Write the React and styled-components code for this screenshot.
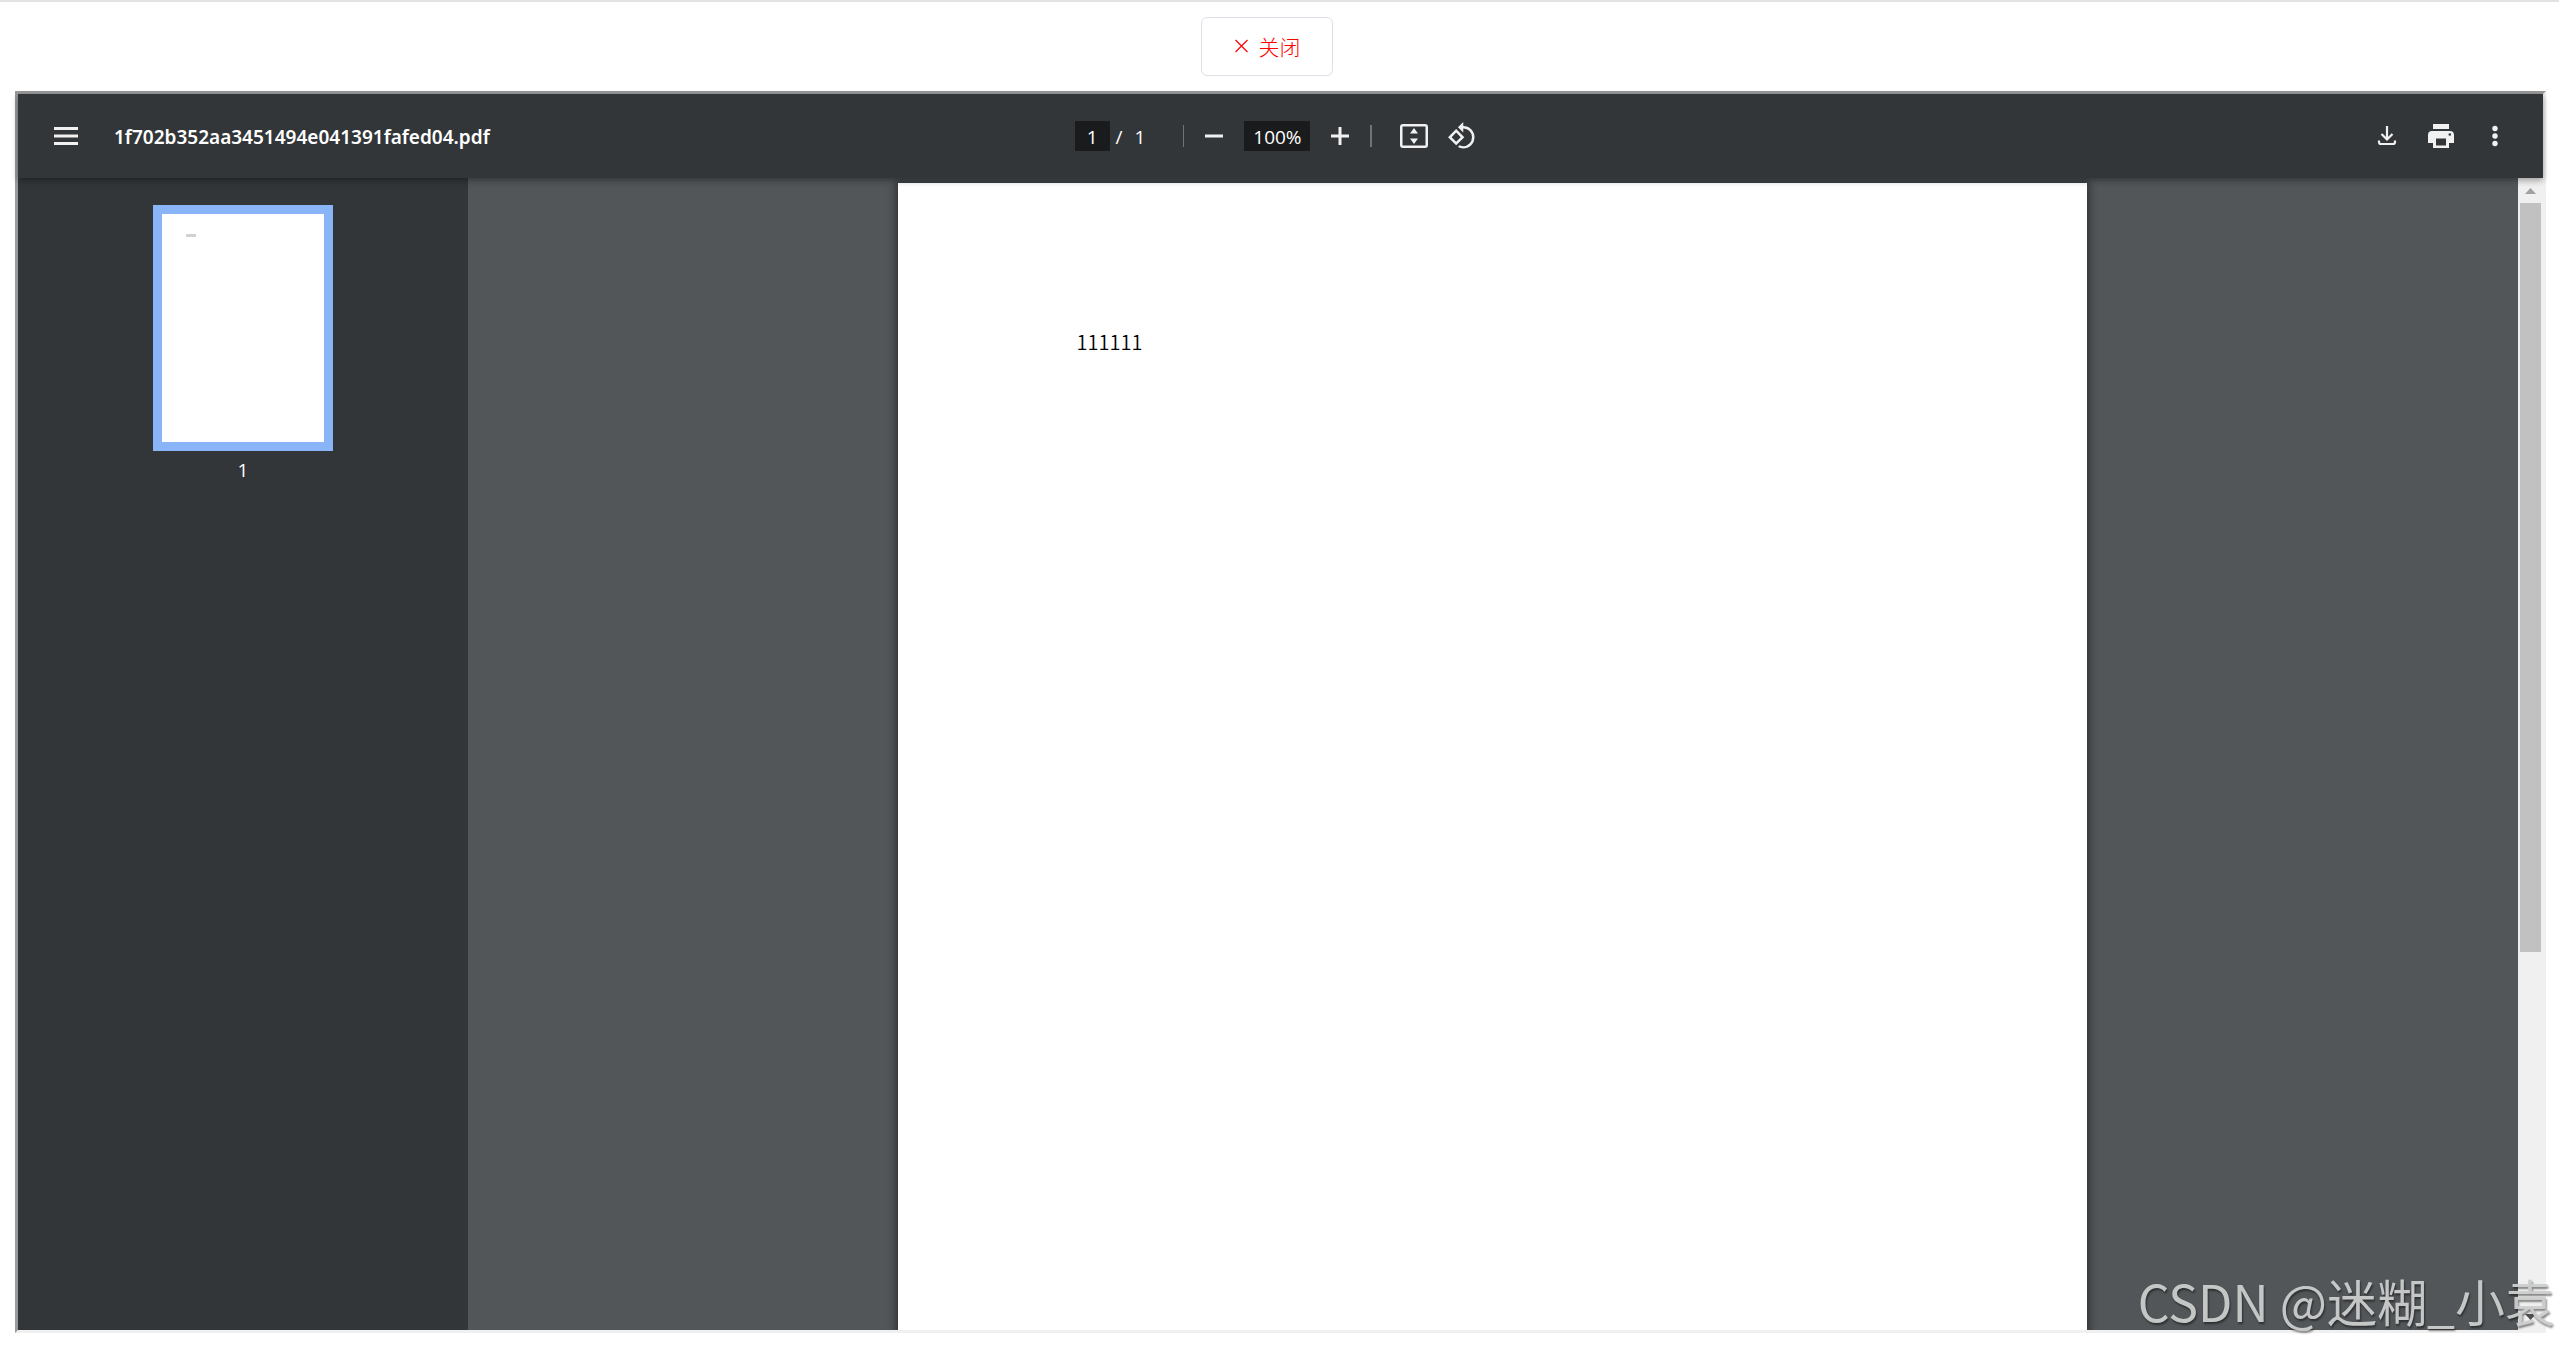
import React from "react";
import styled, { createGlobalStyle } from "styled-components";

const GlobalStyle = createGlobalStyle`
  * { box-sizing: border-box; }
  body { margin: 0; background: #fff; font-family: "Open Sans", "Noto Sans", "Noto Sans CJK SC", sans-serif; }
`;

const Screen = styled.div`
  display: flex;
  flex-direction: column;
  height: 100vh;
  padding: 0 13px 15px 15px;
  border-top: 2px solid #e2e2e2;
  overflow: hidden;
`;

const Actions = styled.header`
  display: flex;
  justify-content: center;
  padding: 15px 28px 15px 0;
`;

const CloseButton = styled.button`
  display: flex;
  align-items: center;
  gap: 10px;
  height: 59px;
  padding: 0 31px 2px 32px;
  border: 1px solid #dcdfe6;
  border-radius: 6px;
  background: #fff;
  color: #f00;
  font: 21px "Noto Sans CJK SC", sans-serif;
  font-weight: 300;
  cursor: pointer;
`;

const Frame = styled.main`
  flex: 1;
  min-height: 0;
  display: flex;
  flex-direction: column;
  border: 3px solid;
  border-color: #9a9a9a #f0f0f0 #f0f0f0 #9a9a9a;
  background: #525659;
`;

const Toolbar = styled.div`
  position: relative;
  z-index: 1;
  display: grid;
  grid-template-columns: 1fr auto 1fr;
  align-items: center;
  height: 84px;
  flex: none;
  background: #323639;
  color: #fff;
  box-shadow: 0 2px 6px rgba(0, 0, 0, 0.3), 0 4px 8px rgba(0, 0, 0, 0.08);
`;

const Group = styled.div`
  display: flex;
  align-items: center;
  justify-content: ${(p) => p.$align || "flex-start"};
  gap: ${(p) => p.$gap || 0}px;
  padding: ${(p) => p.$pad || "0"};
`;

const Title = styled.h1`
  margin: 0;
  padding-top: 2px;
  font-family: "Noto Sans", "Open Sans", sans-serif;
  font-size: 19px;
  line-height: 28px;
  font-weight: 600;
`;

const IconButton = styled.button`
  display: flex;
  align-items: center;
  justify-content: center;
  width: 48px;
  height: 48px;
  padding: 0;
  border: 0;
  background: none;
  color: #f1f1f1;
  cursor: pointer;
`;

const Icon = styled.svg`
  width: 30px;
  height: 30px;
  fill: currentColor;
`;

const CloseIcon = styled.svg`
  width: 15px;
  height: 15px;
  fill: none;
  stroke: currentColor;
`;

const Field = styled.input`
  width: ${(p) => p.$width}px;
  height: 30px;
  padding: 2px 0 0;
  border: 0;
  background: #191b1c;
  color: #fff;
  font: 19px "Open Sans", "Noto Sans", sans-serif;
  text-align: center;
`;

const PageTotal = styled.span`
  display: flex;
  gap: 12px;
  padding: 2px 0 0 6px;
  font-size: 19px;
  line-height: 30px;
`;

const Separator = styled.span`
  width: ${(p) => p.$width}px;
  height: 22px;
  background: #707376;
`;

const Body = styled.div`
  flex: 1;
  min-height: 0;
  display: flex;
`;

const Sidebar = styled.nav`
  width: 450px;
  flex: none;
  display: flex;
  flex-direction: column;
  align-items: center;
  padding-top: 27px;
  background: #323639;
`;

const Thumbnail = styled.button`
  width: 180px;
  height: 246px;
  display: flex;
  align-items: flex-start;
  padding: 20px 24px;
  border: 9px solid #8ab4f8;
  background: #fff;
  cursor: pointer;
`;

const ThumbnailInk = styled.span`
  width: 10px;
  height: 3px;
  background: #d2d2d2;
`;

const ThumbnailLabel = styled.span`
  margin-top: 6px;
  color: #fff;
  font-size: 19px;
  line-height: 26px;
`;

const Viewport = styled.section`
  flex: 1;
  display: flex;
  justify-content: center;
  align-items: flex-start;
  padding: 5px 2px 0 0;
  overflow: hidden;
`;

const Sheet = styled.article`
  width: 1189px;
  flex: none;
  aspect-ratio: 210 / 297;
  padding: 144px 179px;
  background: #fff;
  box-shadow: 0 0 8px 2px rgba(0, 0, 0, 0.45);
`;

const Paragraph = styled.p`
  margin: 0;
  color: #000;
  font: 20px/30px "Noto Sans CJK SC", sans-serif;
  font-weight: 350;
`;

const Scrollbar = styled.div`
  width: 25px;
  flex: none;
  display: flex;
  flex-direction: column;
  background: #f0f0f0;
`;

const ScrollArrow = styled.svg`
  width: 25px;
  height: 25px;
  flex: none;
  fill: ${(p) => p.$color};
`;

const ScrollTrack = styled.div`
  flex: 1;
  padding: 0 2px;
`;

const ScrollThumb = styled.div`
  height: 68%;
  background: #c1c1c1;
`;

const Watermark = styled.div`
  position: fixed;
  z-index: 2;
  right: 4px;
  bottom: 12px;
  color: rgba(204, 205, 206, 0.95);
  font: 50px/72px "Noto Sans CJK SC", sans-serif;
  text-shadow: 1px 2px 2px rgba(0, 0, 0, 0.45);
  white-space: nowrap;
  pointer-events: none;
`;

export default function App() {
  return (
    <Screen>
      <GlobalStyle />
      <Actions>
        <CloseButton type="button">
          <CloseIcon viewBox="0 0 15 15" aria-hidden="true">
            <path d="M1.500 2l12 12M13.500 2l-12 12" strokeWidth="1.200" />
          </CloseIcon>
          关闭
        </CloseButton>
      </Actions>
      <Frame>
        <Toolbar>
          <Group $gap={24} $pad="0 0 0 24px">
            <IconButton type="button" aria-label="Menu">
              <Icon viewBox="0 0 20 20">
                <path d="M2 4h16v2H2zM2 9h16v2H2zM2 14h16v2H2z" />
              </Icon>
            </IconButton>
            <Title>1f702b352aa3451494e041391fafed04.pdf</Title>
          </Group>
          <Group>
            <Field $width={35} aria-label="Page number" defaultValue="1" />
            <PageTotal>
              <span>/</span>
              <span>1</span>
            </PageTotal>
            <Group $gap={6} $pad="0 0 0 38px">
              <Separator $width={1} />
              <IconButton type="button" aria-label="Zoom out">
                <Icon viewBox="0 0 20 20">
                  <path d="M4 9h12v2H4z" />
                </Icon>
              </IconButton>
              <Field $width={66} aria-label="Zoom level" defaultValue="100%" />
              <IconButton type="button" aria-label="Zoom in">
                <Icon viewBox="0 0 20 20">
                  <path d="M9 4h2v5h5v2h-5v5H9v-5H4V9h5z" />
                </Icon>
              </IconButton>
              <Separator $width={2} />
            </Group>
            <Group $pad="0 0 0 18px">
              <IconButton type="button" aria-label="Fit to page">
                <Icon viewBox="0 0 30 30">
                  <path
                    fillRule="evenodd"
                    d="M4 3h22a3 3 0 0 1 3 3v18a3 3 0 0 1-3 3H4a3 3 0 0 1-3-3V6a3 3 0 0 1 3-3zM3.500 5.500v19h23v-19zM15 7l4 5.500h-8zM11 17.500h8L15 23z"
                  />
                </Icon>
              </IconButton>
              <IconButton type="button" aria-label="Rotate counterclockwise">
                <Icon viewBox="0 0 24 24">
                  <path d="M7.340 6.410L.860 12.900l6.490 6.480 6.490-6.480-6.500-6.490zM3.690 12.900l3.660-3.660L11 12.900l-3.660 3.660-3.650-3.660zm15.670-6.260A8.950 8.950 0 0 0 13 4V.760L8.760 5 13 9.240V6c1.790 0 3.580.680 4.950 2.050a7.007 7.007 0 0 1 0 9.900 6.973 6.973 0 0 1-7.790 1.440l-1.490 1.490C10.020 21.620 11.510 22 13 22c2.300 0 4.610-.880 6.360-2.640A8.980 8.980 0 0 0 22 13a8.980 8.980 0 0 0-2.640-6.360z" />
                </Icon>
              </IconButton>
            </Group>
          </Group>
          <Group $align="flex-end" $gap={6} $pad="0 24px 0 0">
            <IconButton type="button" aria-label="Download">
              <Icon viewBox="0 0 30 30">
                <path
                  d="M15 5v13.500M9.500 13l5.500 5.500 5.500-5.500M7 19.500V21a2 2 0 0 0 2 2h12a2 2 0 0 0 2-2v-1.500"
                  fill="none"
                  stroke="currentColor"
                  strokeWidth="2.200"
                />
              </Icon>
            </IconButton>
            <IconButton type="button" aria-label="Print">
              <Icon viewBox="0 0 30 30">
                <path
                  fillRule="evenodd"
                  d="M7 3h16v5H7zM6 10h18a4 4 0 0 1 4 4v8h-5v5H7v-5H2v-8a4 4 0 0 1 4-4zM10 17.500v7h10v-7zM22.500 13.500a1.300 1.300 0 1 0 2.600 0 1.300 1.300 0 1 0-2.600 0z"
                />
              </Icon>
            </IconButton>
            <IconButton type="button" aria-label="More actions">
              <Icon viewBox="0 0 30 30">
                <circle cx="15" cy="7.500" r="2.700" />
                <circle cx="15" cy="15" r="2.700" />
                <circle cx="15" cy="22.500" r="2.700" />
              </Icon>
            </IconButton>
          </Group>
        </Toolbar>
        <Body>
          <Sidebar aria-label="Thumbnails">
            <Thumbnail type="button" aria-label="Page 1">
              <ThumbnailInk />
            </Thumbnail>
            <ThumbnailLabel>1</ThumbnailLabel>
          </Sidebar>
          <Viewport>
            <Sheet>
              <Paragraph>111111</Paragraph>
            </Sheet>
          </Viewport>
          <Scrollbar aria-hidden="true">
            <ScrollArrow viewBox="0 0 25 25" $color="#a0a0a0">
              <path d="M7 16l5.500-6 5.500 6z" />
            </ScrollArrow>
            <ScrollTrack>
              <ScrollThumb />
            </ScrollTrack>
            <ScrollArrow viewBox="0 0 25 25" $color="#505050">
              <path d="M7 9l5.500 6L18 9z" />
            </ScrollArrow>
          </Scrollbar>
        </Body>
      </Frame>
      <Watermark>CSDN @迷糊_小袁</Watermark>
    </Screen>
  );
}
